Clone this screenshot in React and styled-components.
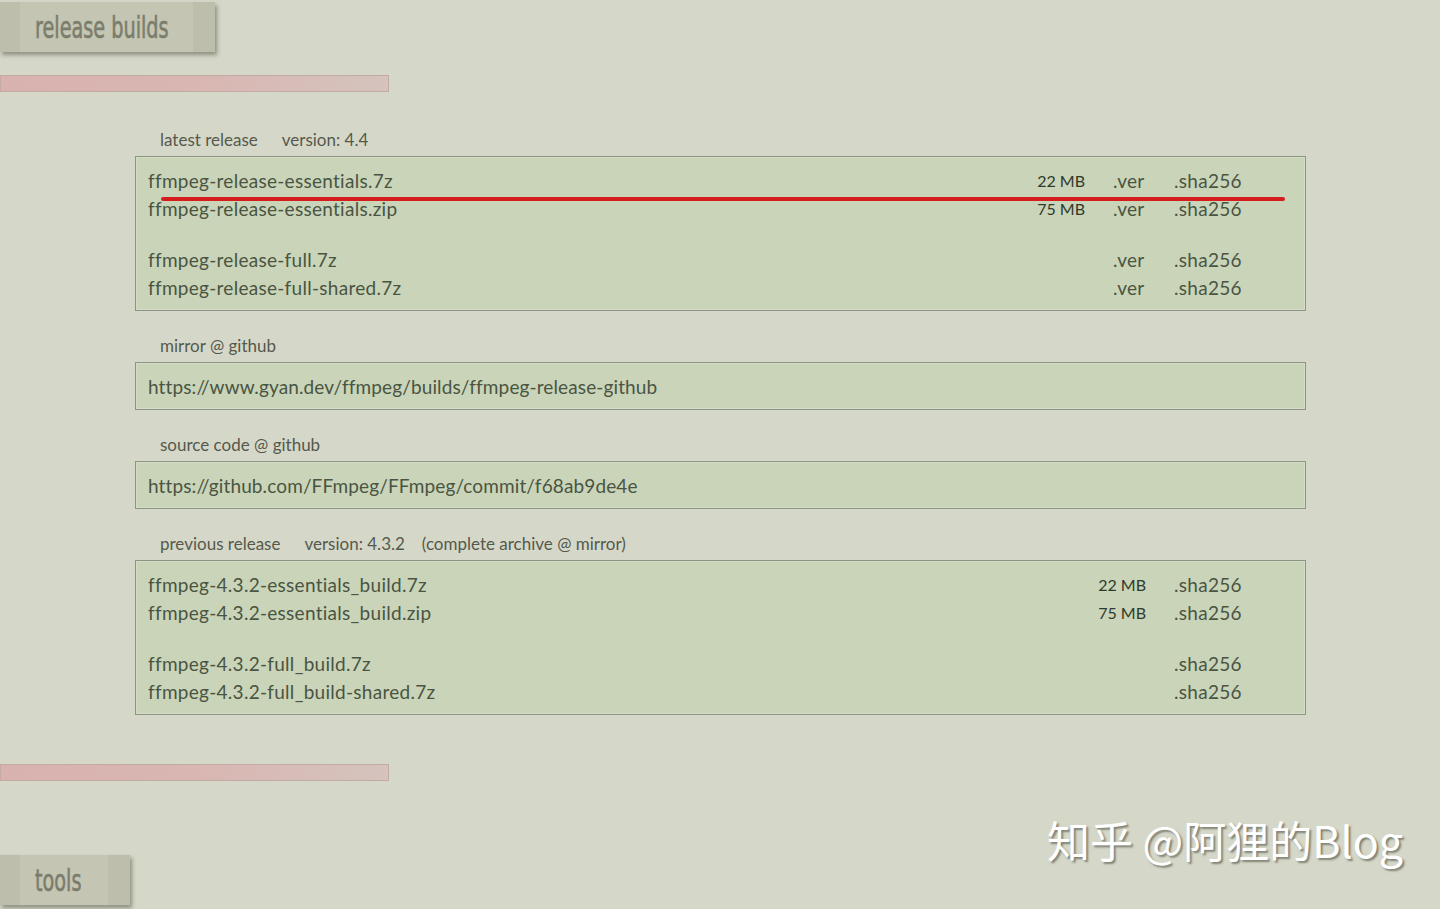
import styled, { createGlobalStyle } from 'styled-components'

const GlobalStyle = createGlobalStyle`
  html, body {
    margin: 0;
    padding: 0;
    background: #d5d8c9;
  }
  body {
    font-family: Lato, "Noto Sans", sans-serif;
    min-height: 909px;
    overflow: hidden;
  }
`

const latest = [
  { name: 'ffmpeg-release-essentials.7z', size: '22 MB', ver: true },
  { name: 'ffmpeg-release-essentials.zip', size: '75 MB', ver: true },
  { spacer: true },
  { name: 'ffmpeg-release-full.7z', ver: true },
  { name: 'ffmpeg-release-full-shared.7z', ver: true },
]

const previous = [
  { name: 'ffmpeg-4.3.2-essentials_build.7z', size: '22 MB' },
  { name: 'ffmpeg-4.3.2-essentials_build.zip', size: '75 MB' },
  { spacer: true },
  { name: 'ffmpeg-4.3.2-full_build.7z' },
  { name: 'ffmpeg-4.3.2-full_build-shared.7z' },
]

function FileList({ files, withVer }) {
  return files.map((f, i) =>
    f.spacer ? (
      <Spacer key={i} />
    ) : (
      <Row key={i} $withVer={withVer}>
        <Name>{f.name}</Name>
        <Size>{f.size}</Size>
        {withVer && <Link>{f.ver ? '.ver' : ''}</Link>}
        <Link>.sha256</Link>
      </Row>
    )
  )
}

function App() {
  return (
    <Page>
      <GlobalStyle />
      <Tab $width={215}>
        <TabText>release builds</TabText>
      </Tab>
      <Divider $top={23} />

      <Main>
        <Label $first>
          <span>latest release</span>
          <span>version: 4.4</span>
        </Label>
        <Box>
          <FileList files={latest} withVer />
          <RedMark />
        </Box>

        <Label>
          <span>mirror @ github</span>
        </Label>
        <Box>
          <Row>
            <Name $url>https://www.gyan.dev/ffmpeg/builds/ffmpeg-release-github</Name>
          </Row>
        </Box>

        <Label>
          <span>source code @ github</span>
        </Label>
        <Box>
          <Row>
            <Name $url>https://github.com/FFmpeg/FFmpeg/commit/f68ab9de4e</Name>
          </Row>
        </Box>

        <Label>
          <span>previous release</span>
          <span>version: 4.3.2</span>
          <Small>(complete archive @ mirror)</Small>
        </Label>
        <Box>
          <FileList files={previous} />
        </Box>
      </Main>

      <Divider $top={49} />
      <Tab $width={130} $top={74}>
        <TabText>tools</TabText>
      </Tab>

      <Watermark>知乎 @阿狸的Blog</Watermark>
    </Page>
  )
}

export default App

const Page = styled.div`
  position: relative;
  width: 1440px;
  height: 909px;
  padding-top: 2px;
  box-sizing: border-box;
`

const Tab = styled.div`
  width: ${(p) => p.$width}px;
  height: 50px;
  margin-top: ${(p) => p.$top || 0}px;
  box-sizing: border-box;
  padding-left: 35px;
  display: flex;
  align-items: center;
  background: linear-gradient(
    to right,
    #bdbeab 0,
    #bdbeab 20px,
    #c4c5b3 20px,
    #c4c5b3 calc(100% - 22px),
    #bdbeab calc(100% - 22px)
  );
  box-shadow: 2px 3px 4px rgba(60, 60, 40, 0.45);
`

const TabText = styled.span`
  font-family: "DejaVu Sans Condensed", "DejaVu Sans", sans-serif;
  font-stretch: condensed;
  font-size: 31px;
  color: #7b7d6c;
  -webkit-text-stroke: 0.6px #7b7d6c;
  display: inline-block;
  transform: scaleX(0.69);
  transform-origin: left center;
  white-space: nowrap;
  margin-top: -1px;
`

const Divider = styled.div`
  width: 389px;
  height: 17px;
  margin-top: ${(p) => p.$top}px;
  box-sizing: border-box;
  border: 1px solid #c3aaa5;
  background: linear-gradient(to right, #d8b2ae, #d9b6b2 50%, #d5c3bd);
`

const Main = styled.div`
  margin-left: 135px;
  width: 1171px;
  padding-top: 12px;
`

const Label = styled.div`
  display: flex;
  gap: 24px;
  padding-left: 25px;
  margin-top: ${(p) => (p.$first ? 24 : 23)}px;
  margin-bottom: 4px;
  height: 24px;
  line-height: 24px;
  font-size: 17px;
  color: #55594c;
`

const Small = styled.span`
  margin-left: -7px;
`

const Box = styled.div`
  position: relative;
  box-sizing: border-box;
  border: 1px solid #8e9485;
  background: #c9d4b9;
  padding: 9px 12px 9px;
  box-shadow: inset 0 0 0 1px #d3dcc5;
`

const Row = styled.div`
  display: grid;
  grid-template-columns: ${(p) => (p.$withVer ? '1fr auto 61px 119px' : '1fr auto 119px')};
  align-items: center;
  height: 28px;
`

const Spacer = styled.div`
  height: 23px;
`

const Name = styled.span`
  font-size: 19px;
  letter-spacing: ${(p) => (p.$url ? 0.12 : 0.28)}px;
  color: #4a5442;
  white-space: nowrap;
`

const Size = styled.span`
  font-size: 16px;
  color: #2f3a2b;
  text-align: right;
  padding-right: 28px;
  white-space: nowrap;
`

const Link = styled.span`
  font-size: 19px;
  letter-spacing: 0.3px;
  color: #4a5442;
`

const RedMark = styled.div`
  position: absolute;
  left: 25px;
  top: 40px;
  width: 1124px;
  height: 4px;
  border-radius: 2px;
  background: #d61d1d;
`

const Watermark = styled.div`
  position: absolute;
  right: 37px;
  top: 808px;
  font-family: "Noto Sans CJK SC", "Noto Sans", sans-serif;
  font-size: 43px;
  color: #ffffff;
  text-shadow: 2px 2px 2px rgba(60, 60, 50, 0.55);
  white-space: nowrap;
`
